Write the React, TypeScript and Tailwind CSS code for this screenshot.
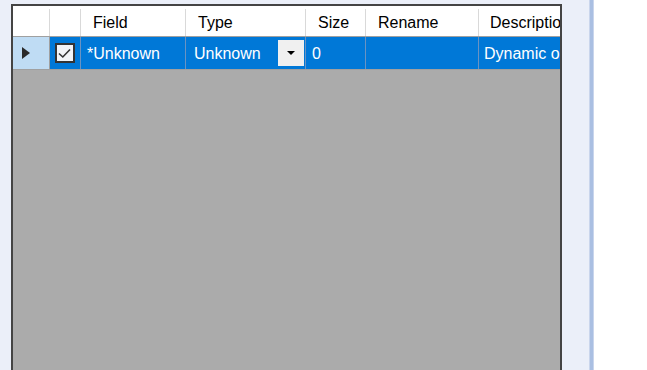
import React from "react";

const font = { fontFamily: '"Liberation Sans", Arial, sans-serif' };

export default function App() {
  return (
    <div className="flex h-screen w-full overflow-hidden bg-white" style={font}>
      <div className="flex h-full w-[589px] shrink-0 bg-[#ebeff9] pl-[11px] pt-[4px]">
        <div className="flex h-[400px] w-[551px] flex-col overflow-hidden border-2 border-[#444444] bg-[#ababab]">
          {/* header */}
          <div className="flex h-[31px] shrink-0 border-b border-[#a0a0a0] bg-white pt-[3px] text-[16px] text-black">
            <div className="w-[37px] shrink-0 border-r border-[#d9d9d9]" />
            <div className="w-[31px] shrink-0 border-r border-[#d9d9d9]" />
            <div className="flex w-[105px] shrink-0 items-center border-r border-[#d9d9d9] pl-[12px]">Field</div>
            <div className="flex w-[120px] shrink-0 items-center border-r border-[#d9d9d9] pl-[12px]">Type</div>
            <div className="flex w-[60px] shrink-0 items-center border-r border-[#d9d9d9] pl-[12px]">Size</div>
            <div className="flex w-[113px] shrink-0 items-center border-r border-[#d9d9d9] pl-[12px]">Rename</div>
            <div className="flex w-[120px] shrink-0 items-center whitespace-nowrap pl-[11px]">Description</div>
          </div>
          {/* data row */}
          <div className="flex h-[33px] shrink-0 border-b border-[#a0a0a0] text-[16px] text-white">
            <div className="flex w-[37px] shrink-0 items-center border-r border-[#a0a0a0] bg-[#bfdcf4] pl-[9px]">
              <svg width="8" height="12" viewBox="0 0 8 12">
                <path d="M0 0 L8 6 L0 12 Z" fill="#2a2a2a" />
              </svg>
            </div>
            <div className="flex w-[31px] shrink-0 items-center justify-center border-r border-[#6a93c2] bg-[#0078d7] pr-[1px]">
              <div className="flex h-[20px] w-[20px] items-center justify-center border-2 border-[#333333] bg-[#f2f4f7]">
                <svg width="13" height="11" viewBox="0 0 13 11">
                  <path d="M1 5.5 L4.8 9 L12 1.5" stroke="#333333" strokeWidth="1.6" fill="none" />
                </svg>
              </div>
            </div>
            <div className="flex w-[105px] shrink-0 items-center border-r border-[#6a93c2] bg-[#0078d7] pl-[6px] pt-[2px]">*Unknown</div>
            <div className="flex w-[120px] shrink-0 items-center justify-between border-r border-[#6a93c2] bg-[#0078d7] pl-[8px] pr-[1px]">
              <span className="pt-[2px]">Unknown</span>
              <div className="flex h-[26px] w-[26px] items-center justify-center bg-[#f0f0f0]">
                <svg width="8" height="4" viewBox="0 0 8 4">
                  <path d="M0 0 L8 0 L4 4 Z" fill="#000000" />
                </svg>
              </div>
            </div>
            <div className="flex w-[60px] shrink-0 items-center border-r border-[#6a93c2] bg-[#0078d7] pl-[6px] pt-[2px]">0</div>
            <div className="w-[113px] shrink-0 border-r border-[#6a93c2] bg-[#0078d7]" />
            <div className="flex w-[120px] shrink-0 items-center whitespace-nowrap bg-[#0078d7] pl-[5px] pt-[2px]">Dynamic or Unknown</div>
          </div>
        </div>
      </div>
      <div className="h-full w-[5px] shrink-0 border-x border-[#c9d5ec] bg-[#aabfe2]" />
      <div className="h-full flex-1 bg-white" />
    </div>
  );
}
